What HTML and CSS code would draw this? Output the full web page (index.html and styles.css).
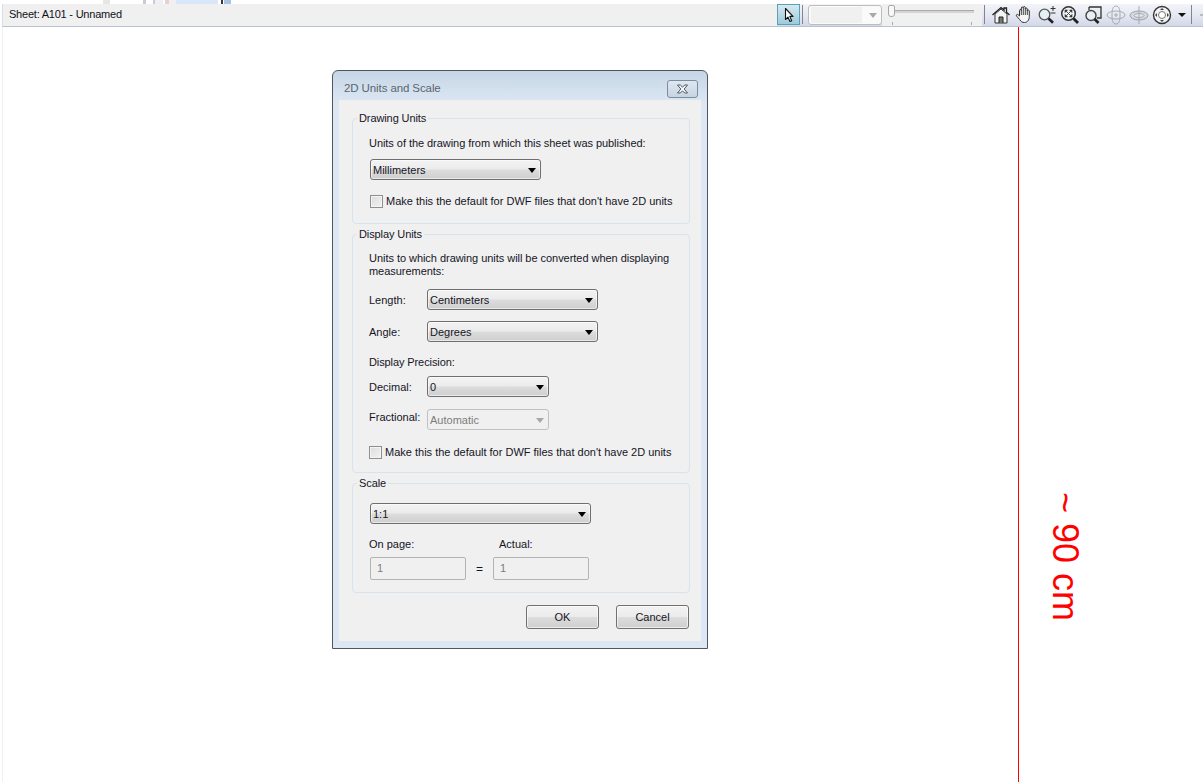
FILE: index.html
```html
<!DOCTYPE html>
<html lang="en">
<head>
<meta charset="utf-8">
<title>2D Units and Scale</title>
<link rel="stylesheet" href="styles.css">
</head>
<body>
<div class="top-strip"></div>
<header class="toolbar">
  <div class="sheet-name">Sheet: A101 - Unnamed</div>
  <div class="tools">
    <button class="tool-select" aria-label="Select">
      <svg width="12" height="16" viewBox="0 0 12 16"><path d="M2.500 1.500v11l2.500-2.400 1.900 4.400 1.800-.8-1.900-4.300h3.200z" fill="#fff" stroke="#111" stroke-width="1.100" stroke-linejoin="round"/></svg>
    </button>
    <span class="sep sep-first"></span>
    <div class="tool-combo"><span class="combo-fill"></span><span class="combo-arrow"></span></div>
    <div class="slider">
      <span class="slider-track"></span>
      <span class="slider-thumb"></span>
      <span class="slider-tick tick-a"></span>
      <span class="slider-tick tick-b"></span>
    </div>
    <span class="sep sep-nav"></span>
    <div class="nav-icons">
      <svg class="nav" viewBox="0 0 20 20"><path d="M1.500 10 10 2.500l3 2.600V3h2.500v4.300L18.500 10" fill="none" stroke="#222" stroke-width="1.300"/><path d="M4 9v9h12V9L10 4z" fill="#f4f4f4" stroke="#333"/><path d="M8 18v-6h4v6" fill="#777" stroke="#222"/></svg>
      <svg class="nav" viewBox="0 0 20 20"><path d="M5.500 11V5.500c0-1.300 1.800-1.300 1.800 0V3c0-1.300 2-1.300 2 0v-.5c0-1.300 2-1.300 2 0V4c0-1.300 2-1.300 2 0v2c0-1.200 2-1.200 2 0v5.500c0 3.500-2 6-4.800 6-2.300 0-3.500-.8-4.700-2.800L2.500 11c-.7-1.200.8-2.200 1.700-1.200z" fill="#f5f5f5" stroke="#333"/><path d="M7.300 5v5M9.300 3v7M11.300 3v7M13.300 4.500V10" fill="none" stroke="#444"/></svg>
      <svg class="nav" viewBox="0 0 20 20"><circle cx="7.500" cy="9.500" r="5.300" fill="#e3f0f6" stroke="#555" stroke-width="1.300"/><path d="m11.500 13.500 4.500 4.300" stroke="#222" stroke-width="2.600"/><path d="M13.500 3.500h5M16 1v5M13.500 8h5" fill="none" stroke="#333"/></svg>
      <svg class="nav" viewBox="0 0 20 20"><circle cx="8.500" cy="8.500" r="6.800" fill="#eef2f4" stroke="#333" stroke-width="1.500"/><path d="m13.500 13.500 4.500 4.500" stroke="#222" stroke-width="2.800"/><path d="M5 5h2.500L5 7.500zM12 5H9.500L12 7.500zM5 12h2.500L5 9.500zM12 12H9.500L12 9.500z" fill="#333" stroke="#333" stroke-width=".6"/><path d="m6 6 5 5M11 6l-5 5" stroke="#555"/></svg>
      <svg class="nav" viewBox="0 0 20 20"><path d="M6 2h12v11h-4" fill="none" stroke="#333" stroke-width="1.300"/><path d="M6 2v3" stroke="#333" stroke-width="1.300"/><circle cx="8" cy="10.500" r="5" fill="#e8f0f4" stroke="#444" stroke-width="1.400"/><path d="m11.500 14 4 4" stroke="#222" stroke-width="2.600"/></svg>
      <svg class="nav nav-off" viewBox="0 0 20 20"><ellipse cx="10" cy="10" rx="9" ry="4" fill="none" stroke="#8f9298"/><path d="M10 1c-3 0-4 3-4 9s1 9 4 9 4-3 4-9-1-9-4-9z" fill="none" stroke="#8f9298"/><path d="M10 8v4M8 10h4" stroke="#8f9298"/></svg>
      <svg class="nav nav-off" viewBox="0 0 20 20"><ellipse cx="10" cy="10.500" rx="9" ry="4.500" fill="#cfd2d8" stroke="#7f8288"/><ellipse cx="10" cy="10.500" rx="5" ry="2" fill="#e4e6ec" stroke="#8f9298"/><path d="M10 1v18" stroke="#8f9298"/></svg>
      <svg class="nav" viewBox="0 0 20 20"><circle cx="10" cy="10" r="8.500" fill="#f2f2f4" stroke="#333" stroke-width="1.400"/><circle cx="10" cy="10" r="3.500" fill="#fff" stroke="#777"/><path d="m10 3 2 2H8zM10 17l2-2H8zM3 10l2 2V8zM17 10l-2 2V8z" fill="#444"/></svg>
    </div>
    <span class="nav-arrow"></span>
    <span class="sep sep-end"></span>
    <span class="faint-tool"></span>
  </div>
</header>

<main class="canvas">
  <div class="measure-line"></div>
  <div class="measure-label">~ 90 cm</div>

  <section class="dialog" role="dialog" aria-label="2D Units and Scale">
    <div class="titlebar">
      <h1 class="title">2D Units and Scale</h1>
      <button class="close" aria-label="Close">
        <svg width="13" height="10" viewBox="0 0 13 10"><path d="M1.500 1h2.800l2.200 2.200L8.700 1h2.800L8.200 5l3.300 4H8.700L6.500 6.800 4.300 9H1.500l3.300-4z" fill="#f7f8fa" stroke="#4f5862" stroke-width="1"/></svg>
      </button>
    </div>
    <div class="body">
      <fieldset class="group group-drawing">
        <legend>Drawing Units</legend>
        <p class="text text-first">Units of the drawing from which this sheet was published:</p>
        <div class="select select-md select-indent select-drawing"><span>Millimeters</span><i class="arrow"></i></div>
        <label class="check check-indent check-drawing"><span class="box"></span><span>Make this the default for DWF files that don't have 2D units</span></label>
      </fieldset>

      <fieldset class="group group-display">
        <legend>Display Units</legend>
        <p class="text text-desc">Units to which drawing units will be converted when displaying measurements:</p>
        <div class="row row-length"><span class="row-label">Length:</span><div class="select select-md"><span>Centimeters</span><i class="arrow"></i></div></div>
        <div class="row row-angle"><span class="row-label">Angle:</span><div class="select select-md"><span>Degrees</span><i class="arrow"></i></div></div>
        <p class="text text-precision">Display Precision:</p>
        <div class="row row-decimal"><span class="row-label">Decimal:</span><div class="select select-sm"><span>0</span><i class="arrow"></i></div></div>
        <div class="row row-fractional"><span class="row-label row-label-up">Fractional:</span><div class="select select-sm select-off"><span>Automatic</span><i class="arrow"></i></div></div>
        <label class="check check-display"><span class="box"></span><span>Make this the default for DWF files that don't have 2D units</span></label>
      </fieldset>

      <fieldset class="group group-scale">
        <legend>Scale</legend>
        <div class="select select-lg select-indent select-scale"><span>1:1</span><i class="arrow"></i></div>
        <div class="scale-labels"><span class="scale-page">On page:</span><span>Actual:</span></div>
        <div class="scale-inputs">
          <div class="input">1</div>
          <span class="equals">=</span>
          <div class="input">1</div>
        </div>
      </fieldset>

      <div class="actions">
        <button class="btn">OK</button>
        <button class="btn">Cancel</button>
      </div>
    </div>
  </section>
</main>
</body>
</html>
```

FILE: styles.css
```css
* { box-sizing: border-box; }
html, body { margin: 0; height: 100%; overflow: hidden; }
body {
  width: 1203px;
  height: 782px;
  background: #fff;
  font-family: "Liberation Sans", Arial, sans-serif;
  font-size: 11px;
  color: #15151f;
  display: flex;
  flex-direction: column;
}
button { font: inherit; color: inherit; padding: 0; }

.top-strip {
  height: 4px;
  background: linear-gradient(90deg,
    #fff 103px, #e6e6e6 103px, #e6e6e6 110px, #fff 110px,
    #fff 143px, #c9cbd8 143px, #c9cbd8 146px, #fff 146px,
    #fff 153px, #c9cbd8 153px, #c9cbd8 155px, #eef0f6 155px, #eef0f6 163px, #fff 163px,
    #fff 165px, #e8cfd0 165px, #e8cfd0 169px, #f0f0f0 169px, #f0f0f0 176px,
    #d9e8f8 176px, #d9e8f8 218px, #fff 218px,
    #fff 221px, #334 221px, #334 223px, #fff 223px, #fff 224px, #a9c4e0 224px, #a9c4e0 231px, #fff 231px);
}

.toolbar {
  height: 23px;
  margin-left: 2px;
  display: flex;
  justify-content: space-between;
  background: #f0f0f0;
  border-bottom: 1px solid #b9c2d0;
  border-left: 1px solid #d4deea;
}
.sheet-name {
  padding: 3px 0 0 6px;
  line-height: 15px;
  letter-spacing: -.22px;
  color: #10101a;
}
.tools {
  width: 426px;
  flex: none;
  display: flex;
  align-items: flex-start;
  background: linear-gradient(180deg, #f3f4f9 0%, #e6e8f2 50%, #d3d8e8 100%);
  position: relative;
}
.tools > * { flex: none; }
.tool-select {
  width: 23px;
  height: 21px;
  display: flex;
  align-items: center;
  justify-content: center;
  border: 1px solid #5e9fb8;
  background: linear-gradient(180deg, #d5e9f1, #9ccbdc);
}
.sep { width: 1px; height: 19px; margin-top: 1px; background: #7f8691; }
.sep-first { margin-left: 2px; }
.tool-combo {
  width: 74px;
  height: 20px;
  margin: 1px 0 0 5px;
  border: 1px solid #bdbdbd;
  border-radius: 3px;
  background: #fafafa;
  display: flex;
  align-items: center;
  padding-left: 2px;
}
.combo-fill { width: 51px; height: 16px; background: #f0f0f0; }
.combo-arrow {
  margin-left: 7px;
  border: 4px solid transparent;
  border-top: 5px solid #a8a8a8;
  border-bottom: 0;
}
.slider { position: relative; width: 100px; height: 22px; background: #f0f0f0; }
.slider-track { position: absolute; left: 8px; top: 6px; width: 84px; height: 3px; background: #d4d4d4; border-top: 1px solid #aaa; }
.slider-thumb { position: absolute; left: 6px; top: 1px; width: 7px; height: 12px; background: #f8f8f8; border: 1px solid #a6a6a6; border-radius: 2px 2px 3px 3px; }
.slider-tick { position: absolute; top: 18px; width: 1px; height: 3px; background: #aaa; }
.tick-a { left: 10px; }
.tick-b { left: 89px; }
.sep-nav { margin: 1px 6px 0 2px; }
.nav-icons { display: flex; gap: 3px; margin-top: 1px; }
.nav { width: 20px; height: 20px; display: block; flex: none; }
.nav-off { opacity: .7; }
.nav-arrow {
  margin: 9px 0 0 6px;
  border: 4px solid transparent;
  border-top: 4px solid #111;
  border-bottom: 0;
}
.sep-end { margin-left: 5px; }
.faint-tool { width: 3px; height: 2px; margin: 10px 0 0 8px; background: #b8bcc6; }

.canvas { position: relative; flex: 1; margin-left: 2px; border-left: 1px solid #eef1f5; }
.measure-line { position: absolute; left: 1015px; top: 0; bottom: 0; width: 1px; background: #f00; }
.measure-label {
  position: absolute;
  left: 1042px;
  top: 465px;
  writing-mode: vertical-rl;
  font-family: "Liberation Sans", Arial, sans-serif;
  font-size: 36px;
  line-height: 40px;
  color: #f00;
  white-space: nowrap;
}

.dialog {
  position: absolute;
  left: 329px;
  top: 43px;
  width: 376px;
  height: 579px;
  border: 1px solid #50565e;
  border-radius: 6px 6px 0 0;
  background: linear-gradient(180deg, #c6d6e6 0, #dce7f3 32px);
  display: flex;
  flex-direction: column;
}
.titlebar {
  height: 29px;
  flex: none;
  display: flex;
  align-items: flex-start;
  justify-content: space-between;
  padding: 9px 9px 0 11px;
}
.title { margin: 0; font-size: 11.5px; line-height: 17px; font-weight: 400; letter-spacing: -.1px; color: #5b6570; }
.close {
  width: 31px;
  height: 18px;
  border: 1px solid #7d8c9c;
  border-radius: 3px;
  background: linear-gradient(180deg, #dfe8f1, #c6d4e3);
  display: flex;
  align-items: center;
  justify-content: center;
}
.body {
  flex: none;
  height: 541px;
  margin: 0 6px;
  padding: 11px 11px 0 13px;
  background: #f0f0f0;
  display: flex;
  flex-direction: column;
  gap: 3px;
}

.group {
  margin: 0;
  min-width: 0;
  padding: 0 0 0 16px;
  border: 1px solid #d9e3ec;
  border-radius: 4px;
}
.group legend { margin-left: -12px; padding: 0 2px; line-height: 14px; letter-spacing: -.1px; color: #15151f; }
.group-drawing { height: 113px; }
.group-display { height: 246px; }
.group-scale { height: 117px; }

.text { margin: 0; line-height: 16px; }
.text-first { margin-top: 10px; letter-spacing: -.05px; }
.text-desc { margin-top: 11px; line-height: 13px; width: 310px; letter-spacing: -.04px; }
.text-precision { margin-top: 13px; line-height: 14px; letter-spacing: -.1px; }

.select {
  height: 21px;
  display: flex;
  align-items: center;
  justify-content: space-between;
  padding: 1px 4px 0 2px;
  border: 1px solid #6f6f6f;
  border-radius: 3px;
  background: linear-gradient(180deg, #f3f3f3 0, #ebebeb 48%, #dcdcdc 52%, #cfcfcf 100%);
  box-shadow: inset 0 0 0 1px rgba(255,255,255,.55);
  line-height: 14px;
}
.select-md { width: 171px; }
.select-sm { width: 122px; }
.select-lg { width: 221px; }
.select-indent { margin-left: 1px; }
.select-drawing { margin-top: 8px; }
.select-scale { margin-top: 13px; }
.arrow {
  width: 0;
  height: 0;
  border: 4px solid transparent;
  border-top: 5px solid #000;
  border-bottom: 0;
}
.select-off {
  background: #f0f0f0;
  border-color: #c0c0c0;
  box-shadow: none;
  color: #7d7d7d;
}
.select-off .arrow { border-top-color: #a8a8a8; }

.check { display: flex; align-items: center; gap: 3px; line-height: 14px; white-space: nowrap; }
.check-drawing { margin-top: 14px; }
.check-display { margin-top: 15px; }
.check-indent { margin-left: 1px; }
.box {
  width: 13px;
  height: 13px;
  flex: none;
  border: 1px solid #8e8f8f;
  background: linear-gradient(135deg, #dcdcdc, #f2f2f2);
  box-shadow: inset 0 0 0 1px #f4f4f4;
}

.row { display: flex; align-items: center; line-height: 14px; }
.row-label { width: 58px; flex: none; }
.row-label-up { align-self: flex-start; margin-top: 1px; }
.row-length { margin-top: 11px; }
.row-angle { margin-top: 11px; }
.row-decimal { margin-top: 7px; }
.row-fractional { margin-top: 12px; }

.scale-labels { display: flex; margin-top: 13px; line-height: 14px; }
.scale-page { width: 130px; }
.scale-inputs { display: flex; align-items: center; margin: 6px 0 0 1px; }
.input {
  width: 96px;
  height: 23px;
  padding: 3px 0 0 6px;
  border: 1px solid #b4b4b4;
  border-radius: 2px;
  background: #f0f0f0;
  color: #7d7d7d;
  line-height: 14px;
}
.equals { width: 27px; text-align: center; font-size: 12px; }

.actions { display: flex; justify-content: flex-end; gap: 17px; margin-top: 9px; padding-right: 1px; }
.btn {
  width: 73px;
  height: 24px;
  border: 1px solid #707070;
  border-radius: 3px;
  background: linear-gradient(180deg, #f3f3f3 0, #ebebeb 48%, #dcdcdc 52%, #cfcfcf 100%);
  box-shadow: inset 0 0 0 1px rgba(255,255,255,.6);
}
```
